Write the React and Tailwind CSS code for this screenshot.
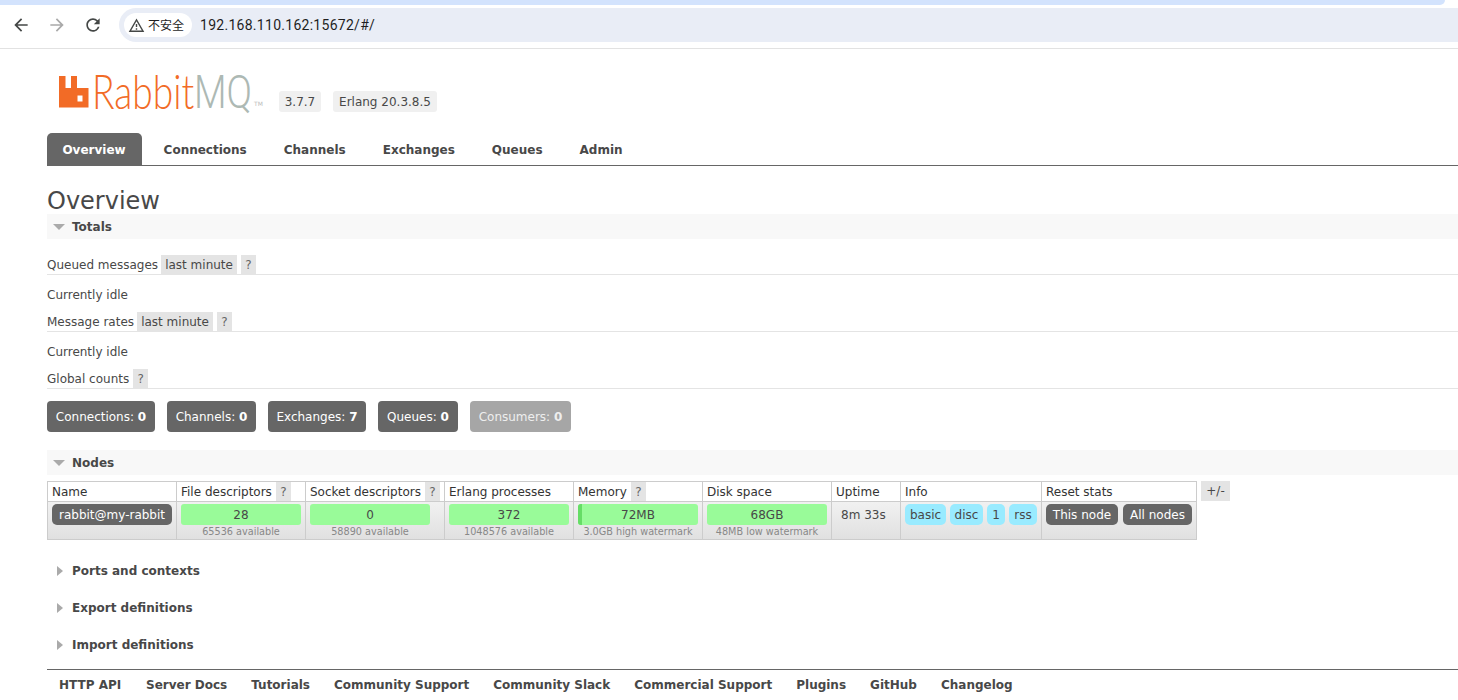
import React from 'react';

const tabs = ['Connections', 'Channels', 'Exchanges', 'Queues', 'Admin'];
const counts = [
  ['Connections', 0, 'w-[108px]'],
  ['Channels', 0, 'w-[89px]'],
  ['Exchanges', 7, 'w-[98px]'],
  ['Queues', 0, 'w-[80px]'],
];
const footerLinks = ['Server Docs', 'Tutorials', 'Community Support', 'Community Slack', 'Commercial Support', 'Plugins', 'GitHub', 'Changelog'];

function Help() {
  return <span className="flex h-full w-[15px] items-center justify-center bg-[#e4e4e4] text-[#666]">?</span>;
}

function Arrow({ open }) {
  return (
    <svg width="12" height="12" viewBox="0 0 12 12" className="shrink-0 fill-[#aaaaaa]">
      {open ? <path d="M0 3h12L6 9z" /> : <path d="M4 1v10L10 6z" />}
    </svg>
  );
}

function SectionHeader({ title, open }) {
  return (
    <div className="flex h-[25px] items-center gap-[7px] bg-[#f8f8f8] pl-[6px] font-bold">
      <Arrow open={open} />
      <span>{title}</span>
    </div>
  );
}

function Collapsed({ title }) {
  return (
    <div className="flex h-[37px] items-center gap-[7px] pl-[6px] font-bold">
      <Arrow />
      <span>{title}</span>
    </div>
  );
}

function SubHead({ label, children }) {
  return (
    <div className="flex h-[20px] items-center gap-[4px] border-b border-[#e4e4e4]">
      <span>{label}</span>
      {children}
    </div>
  );
}

function LastMinute() {
  return <span className="-ml-[1px] flex h-full w-[76px] items-center justify-center bg-[#e4e4e4]">last minute</span>;
}

function Bar({ value, sub, fill }) {
  return (
    <>
      <div className="relative flex h-[21px] w-[120px] items-center justify-center overflow-hidden rounded-[3px] bg-[#99fb99]">
        {fill && <span className="absolute inset-y-0 left-0 w-[4px] bg-[#66dd66]" />}
        {value}
      </div>
      <div className="mt-[1px] w-[120px] text-center text-[9.7px] leading-[12px] text-[#888]">{sub}</div>
    </>
  );
}

function Chip({ children, className }) {
  return <span className={`flex h-[21px] items-center justify-center rounded-[5px] ${className}`}>{children}</span>;
}

const th = 'h-[19px] border border-[#cccccc] bg-white px-[4px] text-left font-normal text-[#333] whitespace-nowrap';
const td = 'border border-[#cccccc] px-[4px] pt-[2px] pb-0 align-top';

function Logo() {
  return (
    <div className="flex h-[33px] w-[204px] items-end whitespace-nowrap">
      <svg width="30" height="33" viewBox="0 0 30 33" className="shrink-0 fill-[#f26b26]">
        <path fillRule="evenodd" d="M0 1h6.5v12H12V1h6v12h11.5v19.5H0zM18.5 20.5v6h5v-6z" />
      </svg>
      <span className="ml-[3px] w-[102px] origin-left scale-x-[0.79] font-['Lato',sans-serif] text-[47px] font-light leading-[33px] text-[#f26b26]">Rabbit</span>
      <span className="w-[60px] origin-left scale-x-[0.8] font-['Roboto',sans-serif] text-[47px] font-light leading-[33px] text-[#adb9b4]">MQ</span>
      <span className="text-[6px] leading-[8px] text-[#bbb]">TM</span>
    </div>
  );
}

export default function App() {
  return (
    <div className="h-[700px] w-[1458px] overflow-hidden bg-white font-['DejaVu_Sans','Verdana',sans-serif] text-[12px] text-[#484848]">
      <div className="h-[5px] w-[1445px] rounded-br-[6px] bg-[#d3e3fd]" />
      <div className="flex h-[44px] items-center border-b border-[#e2e2e2] bg-white pb-[3px]">
        <svg width="20" height="20" viewBox="0 0 24 24" className="ml-[11px] fill-[#444746]"><path d="M20 11H7.83l5.59-5.59L12 4l-8 8 8 8 1.41-1.41L7.83 13H20v-2z" /></svg>
        <svg width="20" height="20" viewBox="0 0 24 24" className="ml-[16px] fill-[#a9a9a9]"><path d="M12 4l-1.41 1.41L16.17 11H4v2h12.17l-5.58 5.59L12 20l8-8z" /></svg>
        <svg width="20" height="20" viewBox="0 0 24 24" className="ml-[16px] fill-[#444746]"><path d="M17.65 6.35A7.958 7.958 0 0012 4c-4.42 0-7.99 3.58-7.99 8s3.57 8 7.99 8c3.73 0 6.84-2.55 7.73-6h-2.08A5.99 5.99 0 0112 18c-3.31 0-6-2.69-6-6s2.69-6 6-6c1.66 0 3.14.69 4.22 1.78L13 11h7V4l-2.35 2.35z" /></svg>
        <div className="ml-[16px] flex h-[34px] flex-1 items-center rounded-l-full bg-[#e9edf6] pl-[5px]">
          <div className="flex h-[24px] w-[68px] items-center gap-[3px] rounded-full bg-white pl-[4px] font-['Noto_Sans_CJK_SC',sans-serif] text-[12px] text-[#1f1f1f]">
            <svg width="17" height="17" viewBox="0 0 24 24" className="fill-[#444746]"><path d="M1 21h22L12 2 1 21zm3.47-2L12 5.99 19.53 19H4.47zM11 16h2v2h-2zm0-6h2v4h-2z" /></svg>
            不安全
          </div>
          <span className="ml-[8px] font-['Roboto',sans-serif] text-[14px] tracking-[0.28px] text-[#1f1f1f]">192.168.110.162:15672/#/</span>
        </div>
      </div>

      <div className="pl-[47px]">
        <div className="flex h-[84px] items-start pt-[26px] pl-[12px]">
          <Logo />
          <div className="ml-[16px] mt-[16px] flex gap-[12px]">
            <span className="flex h-[21px] w-[42px] items-center justify-center rounded-[3px] bg-[#f0f0f0]">3.7.7</span>
            <span className="flex h-[21px] w-[104px] items-center justify-center rounded-[3px] bg-[#f0f0f0]">Erlang 20.3.8.5</span>
          </div>
        </div>

        <nav className="flex h-[33px] items-stretch border-b border-[#666] font-bold">
          <span className="flex w-[95px] items-center justify-center rounded-t-[5px] bg-[#666] pt-[1px] pr-[1px] text-white">Overview</span>
          <div className="ml-[7px] flex items-center pt-[1px]">
            {tabs.map(t => <span key={t} className="px-[18.5px] first:pl-[14.6px]">{t}</span>)}
          </div>
        </nav>

        <h1 className="mt-[22px] h-[26px] text-[24px] leading-[26px]">Overview</h1>

        <SectionHeader title="Totals" open />
        <div className="mt-[16px]">
          <SubHead label="Queued messages"><LastMinute /><Help /></SubHead>
        </div>
        <div className="flex h-[37px] items-center pt-[3px]">Currently idle</div>
        <SubHead label="Message rates"><LastMinute /><Help /></SubHead>
        <div className="flex h-[37px] items-center pt-[3px]">Currently idle</div>
        <SubHead label="Global counts"><Help /></SubHead>

        <div className="mt-[12px] flex gap-[12px]">
          {counts.map(([label, n, w]) => (
            <span key={label} className={`flex h-[31px] items-center justify-center rounded-[4px] bg-[#666] text-white ${w}`}>
              {label}:&nbsp;<b>{n}</b>
            </span>
          ))}
          <span className="flex h-[31px] w-[101px] items-center justify-center rounded-[4px] bg-[#a6a6a6] text-[#eee]">Consumers:&nbsp;<b>0</b></span>
        </div>

        <div className="mt-[18px]"><SectionHeader title="Nodes" open /></div>

        <div className="mt-[6px] flex items-start gap-[4px]">
          <table className="w-[1149px] table-fixed border-collapse">
            <colgroup>
              <col className="w-[129px]" /><col className="w-[129px]" /><col className="w-[139px]" />
              <col className="w-[129px]" /><col className="w-[129px]" /><col className="w-[129px]" />
              <col className="w-[69px]" /><col className="w-[141px]" /><col className="w-[155px]" />
            </colgroup>
            <thead>
              <tr>
                <th className={th}>Name</th>
                <th className={`${th} py-0`}><div className="flex h-[19px] items-center gap-[4px]">File descriptors <Help /></div></th>
                <th className={`${th} py-0`}><div className="flex h-[19px] items-center gap-[4px]">Socket descriptors <Help /></div></th>
                <th className={th}>Erlang processes</th>
                <th className={`${th} py-0`}><div className="flex h-[19px] items-center gap-[4px]">Memory <Help /></div></th>
                <th className={th}>Disk space</th>
                <th className={th}>Uptime</th>
                <th className={th}>Info</th>
                <th className={th}>Reset stats</th>
              </tr>
            </thead>
            <tbody>
              <tr className="h-[38px] bg-gradient-to-b from-[#f1f1f1] to-[#e0e0e0]">
                <td className={td}><Chip className="bg-[#666] text-white">rabbit@my-rabbit</Chip></td>
                <td className={td}><Bar value="28" sub="65536 available" /></td>
                <td className={td}><Bar value="0" sub="58890 available" /></td>
                <td className={td}><Bar value="372" sub="1048576 available" /></td>
                <td className={td}><Bar value="72MB" sub="3.0GB high watermark" fill /></td>
                <td className={td}><Bar value="68GB" sub="48MB low watermark" /></td>
                <td className={td}><div className="flex h-[21px] items-center pl-[5px]">8m 33s</div></td>
                <td className={td}>
                  <div className="flex gap-[4px]">
                    <Chip className="w-[41px] bg-[#99ebff]">basic</Chip>
                    <Chip className="w-[33px] bg-[#99ebff]">disc</Chip>
                    <Chip className="w-[18px] bg-[#99ebff]">1</Chip>
                    <Chip className="w-[28px] bg-[#99ebff]">rss</Chip>
                  </div>
                </td>
                <td className={td}>
                  <div className="flex gap-[5px]">
                    <Chip className="w-[72px] bg-[#666] text-white">This node</Chip>
                    <Chip className="w-[69px] bg-[#666] text-white">All nodes</Chip>
                  </div>
                </td>
              </tr>
            </tbody>
          </table>
          <span className="flex h-[20px] w-[29px] items-center justify-center bg-[#e4e4e4]">+/-</span>
        </div>

        <div className="mt-[12px]">
          <Collapsed title="Ports and contexts" />
          <Collapsed title="Export definitions" />
          <Collapsed title="Import definitions" />
        </div>

        <div className="mt-[6px] flex gap-[24px] border-t border-[#666] pl-[12px] pt-[6px] font-bold">
          <span className="w-[63px]">HTTP API</span>
          {footerLinks.map(l => <span key={l}>{l}</span>)}
        </div>
      </div>
    </div>
  );
}
